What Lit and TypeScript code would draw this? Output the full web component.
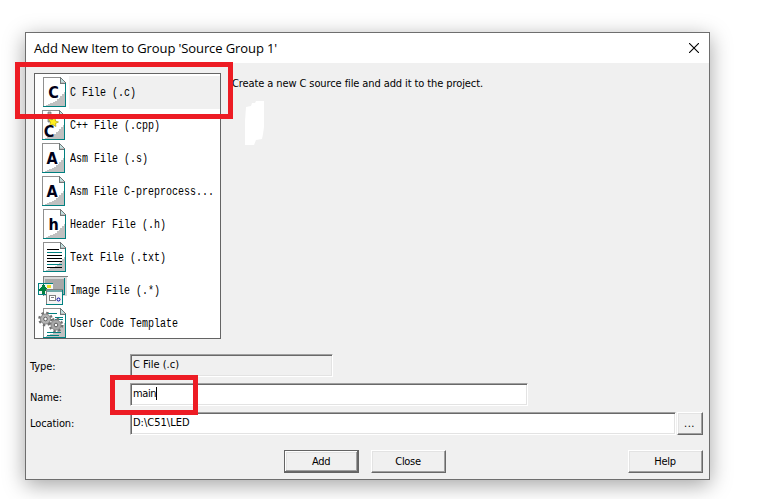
import { LitElement, html, css, svg } from 'lit';
import { customElement, property, state } from 'lit/decorators.js';
import { classMap } from 'lit/directives/class-map.js';

type IconKind = 'c' | 'cpp' | 'asm' | 'header' | 'text' | 'image' | 'template';

interface ItemType {
  icon: IconKind;
  label: string;
}

const ITEM_TYPES: ItemType[] = [
  { icon: 'c', label: 'C File (.c)' },
  { icon: 'cpp', label: 'C++ File (.cpp)' },
  { icon: 'asm', label: 'Asm File (.s)' },
  { icon: 'asm', label: 'Asm File C-preprocess...' },
  { icon: 'header', label: 'Header File (.h)' },
  { icon: 'text', label: 'Text File (.txt)' },
  { icon: 'image', label: 'Image File (.*)' },
  { icon: 'template', label: 'User Code Template' },
];

// sheet of paper, 23x30, drawn at the given offset
const sheet = (x: number) => svg`
  <g transform="translate(${x} 1)" shape-rendering="crispEdges">
    <path d="M0 0h17l6 6v24H0z" fill="#fff" />
    <path d="M22 15v14H3v-1h2v-1h2v-1h3v-1h2v-1h2v-2h2v-1h1v-2h2v-2h2v-2h1v-1z" fill="#c0c0c0" />
    <path d="M0 0h18v1H1v28H0z" fill="#909090" />
    <path d="M17 0h1v1h1v1h1v1h1v1h1v1h1v2h-6z" fill="#707878" />
    <path d="M18 2h1v1h1v1h1v1h-3z" fill="#c0e0e0" />
    <path d="M18 5h4v1h-4z" fill="#c0c0c0" />
    <path d="M22 6h1v24H0v-1h22z" fill="#008080" />
  </g>
`;

const letter = (x: number, y: number, ch: string) => svg`
  <text class="letter" x=${x} y=${y}>${ch}</text>
`;

const gear = (x: number, y: number, fill: string) => svg`
  <g transform="translate(${x} ${y})">
    <circle r="6" fill="none" stroke="#707070" stroke-width="2.600" stroke-dasharray="2.300 2.410" />
    <circle r="5" fill=${fill} stroke="#888" stroke-width="1" />
    <circle r="1.800" fill="#fff" stroke="#606060" stroke-width="1" />
  </g>
`;

@customElement('item-icon')
export class ItemIcon extends LitElement {
  @property() kind: IconKind = 'c';

  static styles = css`
    :host {
      display: block;
      width: 32px;
      height: 33px;
    }
    svg {
      display: block;
    }
    .letter {
      font: bold 16px 'DejaVu Sans Condensed', 'DejaVu Sans', sans-serif;
      letter-spacing: 0;
      text-anchor: middle;
      fill: #000018;
    }
  `;

  private drawing() {
    switch (this.kind) {
      case 'c':
        return svg`${sheet(6)}${letter(16.5, 21.5, 'C')}`;
      case 'cpp':
        return svg`${sheet(5)}
          <path d="M11 3h3v3h4v4h-3v3h-4z" fill="#b0b0b0" stroke="#707070" stroke-width=".7" />
          <path d="M11 9l4 2 3-3 .5 4 3 1-3 1.500.5 3-3.500-2-3 1.500 1-3.500z" fill="#ffee20" stroke="#a09000" stroke-width=".6" />
          ${letter(12, 27.5, 'C')}`;
      case 'asm':
        return svg`${sheet(5)}${letter(15, 21.5, 'A')}`;
      case 'header':
        return svg`${sheet(6)}${letter(16.5, 21.5, 'h')}`;
      case 'text':
        return svg`${sheet(6)}
          <g shape-rendering="crispEdges" transform="translate(0 .5)">
            <path d="M10 8h12M10 14h15M10 17h15M10 20h15M10 26h15" stroke="#000" />
            <path d="M10 11h15M10 23h15" stroke="#008080" />
          </g>`;
      case 'image':
        return svg`
          <g shape-rendering="crispEdges">
            <path d="M6 2h24v20H6z" fill="#d8d8d8" />
            <path d="M6 2h25v1H7v19H6z" fill="#808080" />
            <path d="M8 5h19v15H8z" fill="#a8a8a8" />
            <path d="M27 4h1v17H9v-1h18z" fill="#008080" />
            <path d="M1 9h15v12H1z" fill="#f4f4f4" />
            <path d="M1 9h15v1H2v10H1zM1 20h14v1H1z" fill="#008080" />
            <path d="M6 10h1v1h1v2h1v1h1v1h1v2H8v3H5v-3H2v-2h1v-1h1v-1h1v-2h1z" fill="#008040" />
            <path d="M10 11h4v3h-4z" fill="#e8e020" />
            <path d="M10 16h16v15H10z" fill="#f4f4f4" />
            <path d="M9 15h17v1H10v14H9z" fill="#808080" />
            <path d="M25 16h1v15H9v-1h16z" fill="#008080" />
            <path d="M10 16h15v2H10z" fill="#70a8a8" />
            <path d="M12.500 21.500h6v5h-6z" fill="#fff" stroke="#808080" />
            <path d="M14 23h3v1h-3z" fill="#808080" />
          </g>
          <circle cx="21.500" cy="25.500" r="1.500" fill="#fff" stroke="#0000a0" />`;
      default:
        return svg`${sheet(6)}
          <path d="M11 6.500h9M18 10.500h8M18 12.500h8M10 25.500h14M10 28.500h12" stroke="#008080" />
          ${gear(8.5, 12, '#b4b4b4')}${gear(19, 18, '#a8a8a8')}`;
    }
  }

  render() {
    return html`<svg width="32" height="33" viewBox="0 0 32 33" aria-hidden="true">${this.drawing()}</svg>`;
  }
}

@customElement('app-root')
export class AppRoot extends LitElement {
  @state() private selected = 0;

  static styles = css`
    :host {
      display: block;
      position: relative;
      box-sizing: border-box;
      width: 771px;
      height: 499px;
      padding: 32px 61px 19px 25px;
      overflow: hidden;
      background: #fff;
      color: #000;
      font: 11px/13px 'DejaVu Sans Condensed', 'DejaVu Sans', sans-serif;
      letter-spacing: -0.3px;
    }
    * {
      box-sizing: border-box;
    }
    .dialog {
      display: flex;
      flex-direction: column;
      height: 448px;
      border: 1px solid #6e6e6e;
      background: #f0f0f0;
      box-shadow: 0 5px 20px rgba(0, 0, 0, 0.36);
    }
    .titlebar {
      display: flex;
      align-items: center;
      justify-content: space-between;
      height: 30px;
      padding: 0 10px 0 8px;
      background: #fff;
    }
    .title {
      font: 13px/18px 'Open Sans', 'Noto Sans', sans-serif;
      letter-spacing: -0.1px;
    }
    .upper {
      display: flex;
      gap: 11px;
      padding: 10px 8px 0;
    }
    .list {
      width: 187px;
      height: 266px;
      padding: 2px 0 0 2px;
      overflow: hidden;
      border: 1px solid #646464;
      background: #fff;
    }
    .item {
      display: flex;
      height: 33px;
    }
    .item-label {
      flex: 1;
      padding: 10px 0 0 1px;
      font: 10px/14px 'Liberation Mono', monospace;
      letter-spacing: 0;
      white-space: pre;
    }
    .item-label span {
      display: inline-block;
      transform: scaleY(1.25);
    }
    .selected .item-label {
      background: #f0f0f0;
    }
    .description {
      padding-top: 4px;
      letter-spacing: -0.1px;
      white-space: nowrap;
    }
    .form {
      display: grid;
      grid-template-columns: 100px 1fr;
      grid-auto-rows: 23px;
      row-gap: 6px;
      padding: 15px 6px 0 4px;
    }
    .form label {
      padding: 6px 0 0;
      letter-spacing: -0.1px;
    }
    .form label.low {
      padding-top: 8px;
    }
    .form label.high {
      padding-top: 5px;
    }
    .line {
      display: flex;
      gap: 1px;
    }
    .field {
      height: 23px;
      padding: 3px 2px 0;
      border: 1px solid;
      border-color: #a0a0a0 #fff #fff #a0a0a0;
      background: #fff;
      box-shadow: inset 1px 1px #696969, inset -1px -1px #e3e3e3;
      letter-spacing: 0;
    }
    .type {
      width: 203px;
      background: #f0f0f0;
    }
    .name {
      display: flex;
      width: 398px;
      letter-spacing: -0.4px;
    }
    .caret {
      width: 1px;
      height: 13px;
      background: #000;
    }
    .location {
      width: 546px;
    }
    .btn {
      width: 75px;
      height: 23px;
      padding: 0 1px 0 0;
      border: 1px solid;
      border-color: #fff #696969 #696969 #fff;
      background: #f0f0f0;
      box-shadow: inset -1px -1px #a0a0a0, inset 1px 1px #e3e3e3;
      color: inherit;
      font: inherit;
      letter-spacing: inherit;
    }
    .browse {
      width: 26px;
      letter-spacing: 0.5px;
    }
    .default {
      border-color: #646464;
      box-shadow: inset -1px -1px #696969, inset 1px 1px #fff, inset -2px -2px #a0a0a0, inset 2px 2px #e3e3e3;
    }
    .actions {
      display: flex;
      gap: 12px;
      padding: 15px 6px 0 258px;
    }
    .help {
      margin-left: auto;
    }
    .mark {
      position: absolute;
      border: 5px solid #ed1c24;
      pointer-events: none;
    }
    .mark-type {
      left: 15px;
      top: 62px;
      width: 218px;
      height: 57px;
    }
    .mark-name {
      left: 110px;
      top: 375px;
      width: 88px;
      height: 40px;
    }
    .smudge {
      position: absolute;
      left: 245px;
      top: 101px;
    }
  `;

  private renderItem(item: ItemType, index: number) {
    return html`
      <div
        class=${classMap({ item: true, selected: index === this.selected })}
        @click=${() => (this.selected = index)}
      >
        <item-icon .kind=${item.icon}></item-icon>
        <div class="item-label"><span>${item.label}</span></div>
      </div>
    `;
  }

  render() {
    return html`
      <div class="dialog">
        <div class="titlebar">
          <span class="title">Add New Item to Group 'Source Group 1'</span>
          <svg width="10" height="10" viewBox="0 0 10 10" aria-label="Close">
            <path d="M0 0L10 10M10 0L0 10" stroke="#000" stroke-width="1.100" />
          </svg>
        </div>
        <div class="upper">
          <div class="list">${ITEM_TYPES.map((item, i) => this.renderItem(item, i))}</div>
          <div class="description">Create a new C source file and add it to the project.</div>
        </div>
        <div class="form">
          <label>Type:</label>
          <div class="field type">C File (.c)</div>
          <label class="low">Name:</label>
          <div class="field name">main<span class="caret"></span></div>
          <label class="high">Location:</label>
          <div class="line">
            <div class="field location">D:\\C51\\LED</div>
            <button class="btn browse">...</button>
          </div>
        </div>
        <div class="actions">
          <button class="btn default">Add</button>
          <button class="btn">Close</button>
          <button class="btn help">Help</button>
        </div>
      </div>
      <svg class="smudge" width="19" height="44" viewBox="0 0 19 44">
        <path d="M11 0h8v26l-1 7-1 5-6 1-2 5H0V20l1-14 5-1 1-3h3z" fill="#fff" />
      </svg>
      <div class="mark mark-type"></div>
      <div class="mark mark-name"></div>
    `;
  }
}

declare global {
  interface HTMLElementTagNameMap {
    'app-root': AppRoot;
    'item-icon': ItemIcon;
  }
}
